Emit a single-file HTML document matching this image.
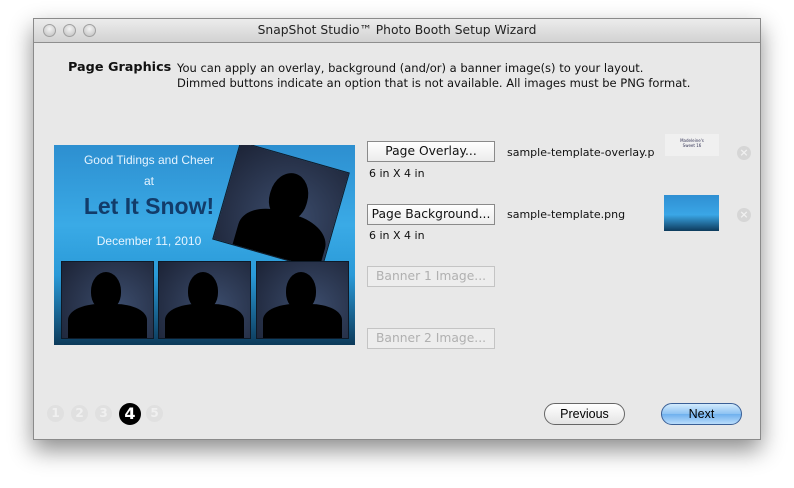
<!DOCTYPE html>
<html><head><meta charset="utf-8"><style>
body{margin:0;width:794px;height:488px;background:#fff;position:relative;overflow:hidden;font-family:"DejaVu Sans","Liberation Sans",sans-serif;}
.win{position:absolute;left:33px;top:18px;width:728px;height:422px;background:#e8e8e8;border:1px solid #8a8a8a;box-sizing:border-box;box-shadow:0 10px 22px rgba(0,0,0,.45);}
.tb{position:absolute;left:0;top:0;right:0;height:23px;background:linear-gradient(#ececec,#d2d2d2);border-bottom:1px solid #8e8e8e;text-align:center;font-size:12.3px;line-height:23px;color:#222;}
.dot{position:absolute;top:5px;width:13px;height:13px;border-radius:50%;background:radial-gradient(circle at 50% 35%,#f4f4f4,#bdbdbd);border:1px solid #a0a0a0;box-sizing:border-box;}
.abs{position:absolute;}
.btn{position:absolute;height:21px;background:linear-gradient(#fff,#ececec);border:1px solid #8a8a8a;box-sizing:border-box;font-size:12.3px;line-height:19px;text-align:center;color:#111;white-space:nowrap;}
.dis{color:#b0b0b0;border-color:#c4c4c4;background:#ededed;}
.sm{font-size:11px;color:#111;}
.pill{position:absolute;height:22px;border-radius:11px;border:1px solid #666;box-sizing:border-box;font-size:12.5px;line-height:20px;text-align:center;font-family:"Liberation Sans",sans-serif;}
.num{position:absolute;top:386px;width:17px;height:17px;border-radius:50%;background:#e0e0e0;color:#f0f0f0;font-size:12px;font-weight:bold;line-height:17px;text-align:center;}
.ph{position:absolute;background:radial-gradient(circle at 60% 60%,#3c4d6d,#1c2336);border:1px solid #0e1a28;overflow:hidden;}
.head{position:absolute;background:#000;border-radius:50% 50% 45% 45%;}
.body{position:absolute;background:#000;border-radius:40% 40% 0 0;}
</style></head><body>
<div class="win">
 <div class="tb">SnapShot Studio™ Photo Booth Setup Wizard</div>
 <div class="dot" style="left:9px"></div><div class="dot" style="left:29px"></div><div class="dot" style="left:49px"></div>
 <div class="abs" style="left:34px;top:41px;font-size:12.8px;font-weight:bold;color:#111">Page Graphics</div>
 <div class="abs" style="left:143px;top:42px;font-size:11.5px;line-height:15px;color:#111">You can apply an overlay, background (and/or) a banner image(s) to your layout.<br>Dimmed buttons indicate an option that is not available. All images must be PNG format.</div>

 <div class="abs" style="left:20px;top:126px;width:301px;height:200px;overflow:hidden;background:linear-gradient(#2d8fd0 0%,#3aaae6 40%,#2a9ad8 65%,#0c3a5a 100%);">
  <div class="abs" style="left:0;width:190px;top:8px;text-align:center;color:#e6f4ff;font-size:12px;font-family:'Liberation Sans',sans-serif">Good Tidings and Cheer</div>
  <div class="abs" style="left:0;width:190px;top:29px;text-align:center;color:#e6f4ff;font-size:12px;font-family:'Liberation Sans',sans-serif">at</div>
  <div class="abs" style="left:0;width:190px;top:48px;text-align:center;color:#123c6a;font-size:23px;font-weight:bold;font-family:'Liberation Sans',sans-serif">Let It Snow!</div>
  <div class="abs" style="left:0;width:190px;top:89px;text-align:center;color:#e6f4ff;font-size:12px;font-family:'Liberation Sans',sans-serif">December 11, 2010</div>
  <div class="ph" style="left:170px;top:10px;width:112px;height:100px;transform:rotate(16deg)"><div class="head" style="left:42px;top:15px;width:38px;height:48px"></div><div class="body" style="left:20px;top:55px;width:90px;height:60px"></div></div>
  <div class="ph" style="left:7px;top:116px;width:91px;height:76px"><div class="head" style="left:29px;top:10px;width:30px;height:38px"></div><div class="body" style="left:6px;top:42px;width:79px;height:40px"></div></div>
  <div class="ph" style="left:104px;top:116px;width:91px;height:76px"><div class="head" style="left:29px;top:10px;width:30px;height:38px"></div><div class="body" style="left:6px;top:42px;width:79px;height:40px"></div></div>
  <div class="ph" style="left:202px;top:116px;width:91px;height:76px"><div class="head" style="left:29px;top:10px;width:30px;height:38px"></div><div class="body" style="left:6px;top:42px;width:79px;height:40px"></div></div>
 </div>

 <div class="btn" style="left:333px;top:122px;width:128px">Page Overlay...</div>
 <div class="abs sm" style="left:335px;top:148px">6 in X 4 in</div>
 <div class="abs" style="left:473px;top:127px;font-size:11px;color:#111">sample-template-overlay.p</div>
 <div class="abs" style="left:631px;top:115px;width:54px;height:22px;background:#f0f0f0;font-size:4px;color:#335;text-align:center;line-height:5px;padding-top:4px;box-sizing:border-box">Madeleine's<br>Sweet 16</div>
 <div class="abs" style="left:703px;top:127px;width:14px;height:14px;border-radius:50%;background:#d6d6d6;color:#f0f0f0;font-size:11px;line-height:14px;text-align:center;font-weight:bold">×</div>

 <div class="btn" style="left:333px;top:185px;width:128px">Page Background...</div>
 <div class="abs sm" style="left:335px;top:210px">6 in X 4 in</div>
 <div class="abs" style="left:473px;top:189px;font-size:11px;color:#111">sample-template.png</div>
 <div class="abs" style="left:630px;top:176px;width:55px;height:36px;background:linear-gradient(#2f8fd2,#3aa6e6 55%,#0d3a5c)"></div>
 <div class="abs" style="left:703px;top:189px;width:14px;height:14px;border-radius:50%;background:#d6d6d6;color:#f0f0f0;font-size:11px;line-height:14px;text-align:center;font-weight:bold">×</div>

 <div class="btn dis" style="left:333px;top:247px;width:128px">Banner 1 Image...</div>
 <div class="btn dis" style="left:333px;top:309px;width:128px">Banner 2 Image...</div>

 <div class="num" style="left:13px">1</div><div class="num" style="left:37px">2</div><div class="num" style="left:61px">3</div>
 <div class="num" style="left:85px;top:384px;width:22px;height:22px;line-height:22px;background:#000;color:#fff;font-size:16px">4</div>
 <div class="num" style="left:112px">5</div>

 <div class="pill" style="left:510px;top:384px;width:81px;background:linear-gradient(#fff,#e4e4e4)">Previous</div>
 <div class="pill" style="left:627px;top:384px;width:81px;border-color:#3a5f96;background:linear-gradient(#d3ebfd,#8cc2f3 50%,#6fb0ee 51%,#b9dcfb)">Next</div>
</div>
</body></html>
